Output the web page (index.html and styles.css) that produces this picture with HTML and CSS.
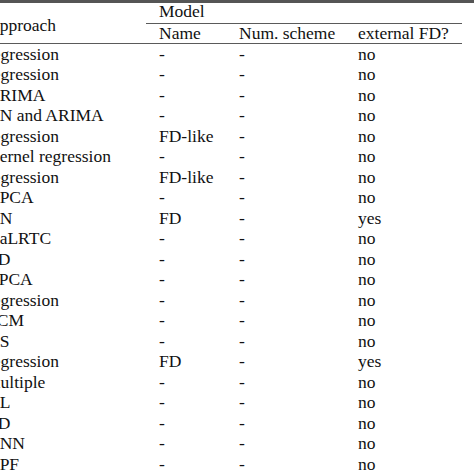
FILE: index.html
```html
<!DOCTYPE html>
<html>
<head>
<meta charset="utf-8">
<link rel="stylesheet" href="styles.css">
</head>
<body>
<div class="toprule"></div>
<table class="tbl">
  <colgroup>
    <col class="c1"><col class="c2"><col class="c3"><col class="c4">
  </colgroup>
  <thead>
    <tr class="h1">
      <th rowspan="2" class="appr">Approach</th>
      <th colspan="3" class="model">Model</th>
    </tr>
    <tr class="h2">
      <th>Name</th>
      <th>Num. scheme</th>
      <th>external FD?</th>
    </tr>
  </thead>
  <tbody>
    <tr><td>regression</td><td>-</td><td>-</td><td>no</td></tr>
    <tr><td>regression</td><td>-</td><td>-</td><td>no</td></tr>
    <tr><td>ARIMA</td><td>-</td><td>-</td><td>no</td></tr>
    <tr><td>AN and ARIMA</td><td>-</td><td>-</td><td>no</td></tr>
    <tr><td>regression</td><td>FD-like</td><td>-</td><td>no</td></tr>
    <tr><td>Kernel regression</td><td>-</td><td>-</td><td>no</td></tr>
    <tr><td>regression</td><td>FD-like</td><td>-</td><td>no</td></tr>
    <tr><td>KPCA</td><td>-</td><td>-</td><td>no</td></tr>
    <tr><td>AN</td><td>FD</td><td>-</td><td>yes</td></tr>
    <tr><td>HaLRTC</td><td>-</td><td>-</td><td>no</td></tr>
    <tr><td>TD</td><td>-</td><td>-</td><td>no</td></tr>
    <tr><td>BPCA</td><td>-</td><td>-</td><td>no</td></tr>
    <tr><td>regression</td><td>-</td><td>-</td><td>no</td></tr>
    <tr><td>FCM</td><td>-</td><td>-</td><td>no</td></tr>
    <tr><td>KS</td><td>-</td><td>-</td><td>no</td></tr>
    <tr><td>regression</td><td>FD</td><td>-</td><td>yes</td></tr>
    <tr><td>multiple</td><td>-</td><td>-</td><td>no</td></tr>
    <tr><td>DL</td><td>-</td><td>-</td><td>no</td></tr>
    <tr><td>TD</td><td>-</td><td>-</td><td>no</td></tr>
    <tr><td>KNN</td><td>-</td><td>-</td><td>no</td></tr>
    <tr><td>KPF</td><td>-</td><td>-</td><td>no</td></tr>
  </tbody>
</table>
</body>
</html>
```
FILE: styles.css
```css
html, body {
  margin: 0;
  padding: 0;
  background: #ffffff;
  overflow: hidden;
  width: 474px;
  height: 474px;
}
body {
  font-family: "Liberation Serif", "Times New Roman", serif;
  font-size: 17.5px;
  color: #111111;
}
.toprule {
  height: 3px;
  background: #555555;
}
.tbl {
  border-collapse: collapse;
  table-layout: fixed;
  width: 488px;
  margin-left: -26px;
  margin-top: -1.5px;
}
.c1 { width: 172px; }
.c2 { width: 80px; }
.c3 { width: 119px; }
.c4 { width: 117px; }
.tbl th, .tbl td {
  padding: 0 0 0 13px;
  text-align: left;
  font-weight: normal;
  white-space: nowrap;
  overflow: hidden;
  line-height: 20.5px;
}
.h1 th {
  line-height: 19px;
  height: 19px;
}
.h1 .model {
  border-bottom: 1.5px solid #5a5a5a;
  line-height: 17px;
  padding-bottom: 2px;
}
.h2 th {
  line-height: 19px;
  height: 19px;
  border-bottom: 1.5px solid #5a5a5a;
}
.h1 .appr {
  vertical-align: middle;
  padding-top: 6px;
  border-bottom: 1.5px solid #5a5a5a;
}
```
